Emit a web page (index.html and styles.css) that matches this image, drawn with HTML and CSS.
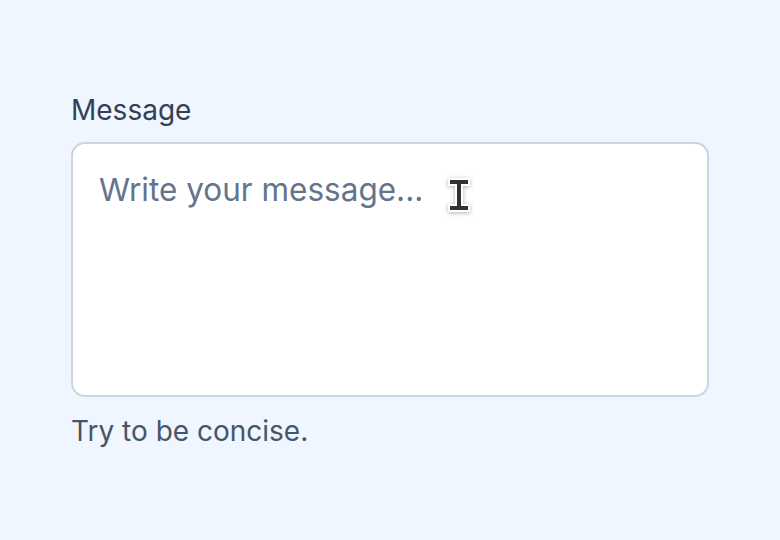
FILE: index.html
```html
<!DOCTYPE html>
<html>
<head>
<meta charset="utf-8">
<link rel="stylesheet" href="styles.css">
</head>
<body>
<main class="page">
  <div class="field">
    <label class="label" for="msg">Message</label>
    <div class="input-wrap">
      <textarea id="msg" class="textarea" placeholder="Write your message..."></textarea>
      <svg class="cursor" width="26" height="38" viewBox="0 0 26 38" xmlns="http://www.w3.org/2000/svg">
        <path d="M2 2h22v8h-7v18h7v8H2v-8h7V10H2z" fill="#fff"/>
        <path d="M4 4h18v4h-7v22h7v4H4v-4h7V8H4z" fill="#2f3336"/>
      </svg>
    </div>
    <p class="help">Try to be concise.</p>
  </div>
</main>
</body>
</html>
```
FILE: styles.css
```css
html, body {
  margin: 0;
  padding: 0;
}
body {
  background: #eff6ff;
  font-family: Inter, "Noto Sans", sans-serif;
  width: 780px;
  height: 540px;
  overflow: hidden;
}
.page {
  padding: 92px 71px 0 71px;
}
.field {
  display: flex;
  flex-direction: column;
}
.label {
  font-size: 28px;
  line-height: 36px;
  color: #334155;
  font-weight: 400;
  margin-bottom: 14px;
}
.input-wrap {
  position: relative;
}
.textarea {
  display: block;
  box-sizing: border-box;
  width: 638px;
  height: 255px;
  margin: 0;
  padding: 26px 26px 24px;
  border: 2px solid #cbd5e1;
  border-radius: 14px;
  background: #fff;
  font-family: Inter, "Noto Sans", sans-serif;
  font-size: 31.5px;
  line-height: 40px;
  color: #1e293b;
  resize: none;
  outline: none;
}
.textarea::placeholder {
  color: #64748b;
  opacity: 1;
}
.cursor {
  position: absolute;
  left: 375px;
  top: 34px;
  filter: drop-shadow(0 1px 2px rgba(0,0,0,0.3));
}
.help {
  margin: 16px 0 0 0;
  font-size: 28px;
  line-height: 36px;
  color: #475569;
}
```
